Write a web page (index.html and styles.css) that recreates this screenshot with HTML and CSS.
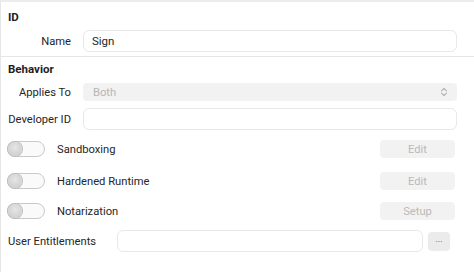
FILE: index.html
```html
<!DOCTYPE html>
<html lang="en">
<head>
    <meta charset="UTF-8">
    <title>Sign</title>
    <link rel="stylesheet" href="styles.css">
</head>
<body>
    <div class="panel">
        <div class="section-title">ID</div>
        <div class="row field-row">
            <label class="label">Name</label>
            <div class="input">Sign</div>
        </div>

        <div class="separator"></div>

        <div class="section-title behavior">Behavior</div>
        <div class="row popup-row">
            <label class="label">Applies To</label>
            <div class="popup">
                <span>Both</span>
                <svg class="chevrons" width="8" height="10" viewBox="0 0 8 10">
                    <path d="M1.5 3.8 L4 1.5 L6.5 3.8 M1.5 6.2 L4 8.5 L6.5 6.2" fill="none" stroke="#b0b0b0" stroke-width="1.1" stroke-linecap="round" stroke-linejoin="round"/>
                </svg>
            </div>
        </div>
        <div class="row field-row dev-row">
            <label class="label">Developer ID</label>
            <div class="input"></div>
        </div>

        <div class="row toggle-row first">
            <span class="toggle"><span class="knob"></span></span>
            <span class="toggle-label">Sandboxing</span>
            <button class="btn">Edit</button>
        </div>
        <div class="row toggle-row second">
            <span class="toggle"><span class="knob"></span></span>
            <span class="toggle-label">Hardened Runtime</span>
            <button class="btn">Edit</button>
        </div>
        <div class="row toggle-row third">
            <span class="toggle"><span class="knob"></span></span>
            <span class="toggle-label">Notarization</span>
            <button class="btn">Setup</button>
        </div>

        <div class="row ent-row">
            <label class="ent-label">User Entitlements</label>
            <div class="input ent-input"></div>
            <button class="more">...</button>
        </div>
    </div>
</body>
</html>
```

FILE: styles.css
```css
html, body {
    margin: 0;
    padding: 0;
    background: #ffffff;
}

body {
    font-family: Roboto, "Noto Sans", sans-serif;
    font-size: 11.2px;
    color: #262626;
}

.panel {
    height: 270px;
    border-top: 2px solid #ececec;
    border-left: 1px solid #e6e6e6;
    overflow: hidden;
}

.section-title {
    height: 16px;
    line-height: 16px;
    margin-top: 7px;
    padding-left: 7px;
    font-weight: 700;
    font-size: 11.5px;
    color: #1e1e1e;
}

.section-title.behavior {
    margin-top: 4px;
}

.row {
    display: flex;
    align-items: center;
}

.label {
    width: 63px;
    margin-left: 7px;
    margin-right: 12px;
    text-align: right;
    white-space: nowrap;
}

.field-row {
    height: 22px;
    margin-top: 5px;
    margin-right: 17px;
}

.dev-row {
    margin-top: 7px;
}

.input {
    flex: 1;
    height: 20px;
    line-height: 20px;
    padding: 0 8px;
    background: #ffffff;
    border: 1px solid #e8e8e8;
    border-radius: 6px;
    color: #1e1e1e;
    font-size: 11.5px;
}

.separator {
    height: 1px;
    margin-top: 4px;
    background: #e6e6e6;
}

.popup-row {
    height: 18px;
    margin-top: 6px;
    margin-right: 17px;
}

.popup {
    flex: 1;
    height: 18px;
    display: flex;
    align-items: center;
    justify-content: space-between;
    padding: 0 9px 0 10px;
    background: #f2f2f2;
    border-radius: 4px;
    color: #b6b6b6;
}

.chevrons {
    display: block;
}

.toggle-row {
    height: 18px;
    margin-right: 19px;
}

.toggle-row.first {
    margin-top: 10px;
}

.toggle-row.second {
    margin-top: 14px;
}

.toggle-row.third {
    margin-top: 12px;
}

.toggle {
    width: 36px;
    height: 14px;
    margin-left: 6px;
    border: 1px solid #c9c9c9;
    border-radius: 8px;
    background: #fafafa;
    display: flex;
    align-items: center;
}

.knob {
    width: 14px;
    height: 14px;
    border-radius: 50%;
    background: radial-gradient(circle at 50% 40%, #e6e6e6, #c8c8c8);
    box-shadow: 0 0 0 1px #bdbdbd;
}

.toggle-label {
    flex: 1;
    margin-left: 12px;
}

.btn {
    width: 75px;
    height: 18px;
    padding: 0;
    border: none;
    border-radius: 4px;
    background: #f2f2f2;
    color: #b9b9b9;
    font-family: Roboto, "Noto Sans", sans-serif;
    font-size: 11.2px;
}

.ent-row {
    height: 22px;
    margin-top: 10px;
    margin-right: 24px;
}

.ent-label {
    width: 109px;
    margin-left: 7px;
    white-space: nowrap;
}

.ent-input {
    margin-right: 5px;
}

.more {
    width: 22px;
    height: 18px;
    padding: 0 0 4px 0;
    border: none;
    border-radius: 4px;
    background: #ebebeb;
    box-shadow: 0 1px 1px rgba(0, 0, 0, 0.08);
    color: #555555;
    font-family: Roboto, "Noto Sans", sans-serif;
    font-size: 9px;
}
```
